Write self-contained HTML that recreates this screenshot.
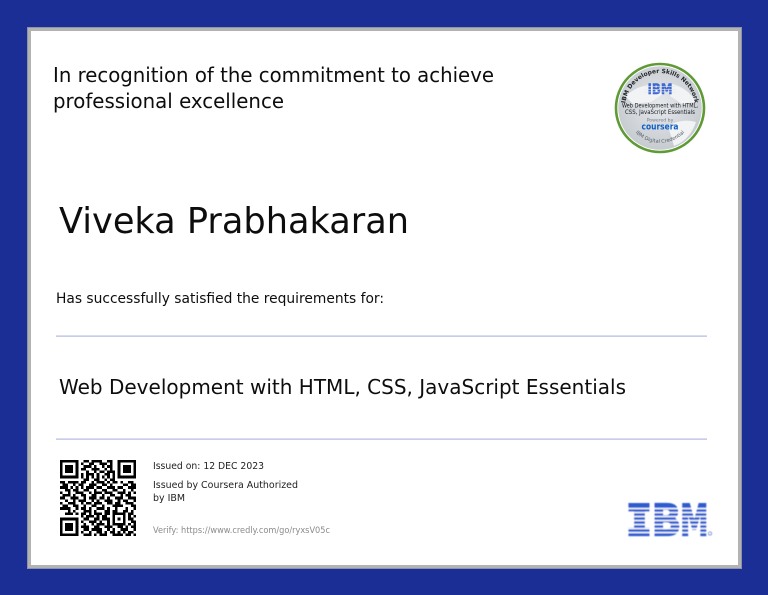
<!DOCTYPE html>
<html><head><meta charset="utf-8"><style>
html,body{margin:0;padding:0;width:768px;height:595px;overflow:hidden;background:#1a2e96}
svg{display:block}
text{font-family:"DejaVu Sans","Liberation Sans",sans-serif}
</style></head><body>
<svg width="768" height="595" viewBox="0 0 768 595" xmlns="http://www.w3.org/2000/svg">
<defs>
<radialGradient id="g" cx="50%" cy="45%" r="55%"><stop offset="0" stop-color="#e6e9ec"/><stop offset="1" stop-color="#c6cbd0"/></radialGradient>
<path id="top" d="M625 108a35 35 0 0 1 70 0"/>
<path id="bot" d="M628 122a35 35 0 0 0 64 0"/>
<filter id="b" x="-5%" y="-5%" width="110%" height="110%"><feGaussianBlur stdDeviation="0.3"/></filter>
<filter id="b1" x="-5%" y="-5%" width="110%" height="110%"><feGaussianBlur stdDeviation="0.3"/></filter>
<filter id="b2" x="-5%" y="-5%" width="110%" height="110%"><feGaussianBlur stdDeviation="0.45"/></filter>
</defs>
<rect width="768" height="595" fill="#1a2e96"/>
<rect x="27" y="27" width="715" height="542" fill="#8f93a8"/>
<rect x="28" y="28" width="713" height="540" fill="#b3b3b3"/>
<rect x="31" y="31" width="707" height="534" fill="#fff"/>

<g fill="#111" filter="url(#b)">
<text x="53" y="82" font-size="20" textLength="441" lengthAdjust="spacingAndGlyphs">In recognition of the commitment to achieve</text>
<text x="53" y="108" font-size="20" textLength="231" lengthAdjust="spacingAndGlyphs">professional excellence</text>
<text x="59" y="233" font-size="35.5" textLength="350" lengthAdjust="spacingAndGlyphs">Viveka Prabhakaran</text>
<text x="56" y="303" font-size="14" textLength="328" lengthAdjust="spacingAndGlyphs">Has successfully satisfied the requirements for:</text>
<text x="59" y="394" font-size="20" textLength="567" lengthAdjust="spacingAndGlyphs">Web Development with HTML, CSS, JavaScript Essentials</text>
<text x="153" y="469" font-size="9.6" fill="#222" textLength="111" lengthAdjust="spacingAndGlyphs">Issued on: 12 DEC 2023</text>
<text x="153" y="488" font-size="9.6" fill="#222" textLength="145" lengthAdjust="spacingAndGlyphs">Issued by Coursera Authorized</text>
<text x="153" y="501" font-size="9.6" fill="#222" textLength="32" lengthAdjust="spacingAndGlyphs">by IBM</text>
<text x="153" y="533" font-size="9" fill="#8a8a8a" textLength="177" lengthAdjust="spacingAndGlyphs">Verify: https://www.credly.com/go/ryxsV05c</text>
</g>

<rect x="56" y="335.6" width="651" height="1" fill="#a3abdf"/>
<rect x="56" y="438.6" width="651" height="1" fill="#a3abdf"/>

<!-- QR -->
<svg x="60" y="460" width="76" height="76" viewBox="0 0 29 29" shape-rendering="crispEdges">
<path fill="none" stroke="#000" stroke-width="1" d="
M0 .5h7M22 .5h7M9 .5h2M12 .5h4M18 .5h2
M0 1.5h1M6 1.5h1M22 1.5h1M28 1.5h1M8 1.5h1M11 1.5h2M15 1.5h3M19 1.5h1
M0 2.5h1M2 2.5h3M6 2.5h1M22 2.5h1M24 2.5h3M28 2.5h1M9 2.5h3M13 2.5h1M16 2.5h1M18 2.5h2
M0 3.5h1M2 3.5h3M6 3.5h1M22 3.5h1M24 3.5h3M28 3.5h1M8 3.5h2M12 3.5h3M17 3.5h1M19 3.5h1
M0 4.5h1M2 4.5h3M6 4.5h1M22 4.5h1M24 4.5h3M28 4.5h1M10 4.5h1M13 4.5h1M15 4.5h2M18 4.5h3
M0 5.5h1M6 5.5h1M22 5.5h1M28 5.5h1M8 5.5h1M10 5.5h3M14 5.5h1M17 5.5h2M20 5.5h1
M0 6.5h7M22 6.5h7M8 6.5h1M10 6.5h1M12 6.5h1M14 6.5h1M16 6.5h1M18 6.5h1M20 6.5h1
M9 7.5h2M13 7.5h2M17 7.5h1M19 7.5h2
M0 8.5h2M3 8.5h3M6 8.5h1M8 8.5h2M12 8.5h1M14 8.5h3M18 8.5h1M20 8.5h2M23 8.5h1M26 8.5h2
M1 9.5h2M5 9.5h1M7 9.5h2M11 9.5h3M16 9.5h2M19 9.5h1M24 9.5h2M27 9.5h2
M0 10.5h3M4 10.5h1M6 10.5h1M8 10.5h1M10 10.5h3M14 10.5h2M18 10.5h3M22 10.5h2M26 10.5h3
M2 11.5h2M5 11.5h2M9 11.5h2M13 11.5h1M16 11.5h2M20 11.5h2M24 11.5h1M27 11.5h1
M0 12.5h1M3 12.5h1M6 12.5h3M11 12.5h1M13 12.5h3M17 12.5h3M22 12.5h3M26 12.5h1M28 12.5h1
M1 13.5h3M5 13.5h1M8 13.5h2M12 13.5h2M16 13.5h1M19 13.5h2M23 13.5h1M25 13.5h2
M0 14.5h2M4 14.5h2M6 14.5h1M9 14.5h1M11 14.5h3M15 14.5h2M18 14.5h1M21 14.5h3M26 14.5h3
M2 15.5h1M5 15.5h1M7 15.5h3M12 15.5h1M14 15.5h1M17 15.5h3M22 15.5h1M24 15.5h2M28 15.5h1
M0 16.5h1M3 16.5h3M8 16.5h1M10 16.5h2M13 16.5h3M18 16.5h2M21 16.5h2M25 16.5h3
M1 17.5h2M5 17.5h2M9 17.5h1M12 17.5h2M16 17.5h1M20 17.5h4M27 17.5h2
M0 18.5h4M6 18.5h1M8 18.5h2M11 18.5h1M14 18.5h3M18 18.5h1M21 18.5h1M25 18.5h1M28 18.5h1
M3 19.5h1M5 19.5h1M9 19.5h3M13 19.5h1M17 19.5h2M20 19.5h2M24 19.5h2M27 19.5h1
M2 20.5h3M6 20.5h1M8 20.5h2M11 20.5h1M13 20.5h3M17 20.5h2M20 20.5h5M26 20.5h2
M8 21.5h1M10 21.5h3M14 21.5h1M16 21.5h2M20 21.5h1M24 21.5h1M26 21.5h1M28 21.5h1
M0 22.5h7M9 22.5h2M13 22.5h2M16 22.5h3M20 22.5h1M22 22.5h1M24 22.5h1M26 22.5h2
M0 23.5h1M6 23.5h1M8 23.5h1M11 23.5h3M15 23.5h1M18 23.5h1M20 23.5h1M24 23.5h1M27 23.5h2
M0 24.5h1M2 24.5h3M6 24.5h1M9 24.5h1M12 24.5h1M14 24.5h3M18 24.5h1M20 24.5h5M26 24.5h1M28 24.5h1
M0 25.5h1M2 25.5h3M6 25.5h1M8 25.5h3M13 25.5h2M17 25.5h3M22 25.5h2M25 25.5h1M27 25.5h2
M0 26.5h1M2 26.5h3M6 26.5h1M9 26.5h2M12 26.5h4M18 26.5h1M20 26.5h1M23 26.5h3M28 26.5h1
M0 27.5h1M6 27.5h1M8 27.5h1M11 27.5h1M14 27.5h2M17 27.5h1M19 27.5h2M22 27.5h1M24 27.5h1M26 27.5h2
M0 28.5h7M9 28.5h3M13 28.5h1M15 28.5h3M20 28.5h4M25 28.5h2M28 28.5h1"/>
</svg>

<!-- IBM logo -->
<g filter="url(#b2)">
<g font-size="44" style="font-family:'DejaVu Serif','Liberation Serif',serif;font-weight:700" fill="#2f5ccf" stroke="#2f5ccf" stroke-width="1.3">
<text x="621" y="535.5" textLength="36" lengthAdjust="spacingAndGlyphs">I</text>
<text x="651.5" y="535.5" textLength="30" lengthAdjust="spacingAndGlyphs">B</text>
<text x="680" y="535.5" textLength="28.5" lengthAdjust="spacingAndGlyphs">M</text>
</g>
<g fill="#fff">
<rect x="626" y="511.6" width="8" height="16.2"/><rect x="645" y="511.6" width="8" height="16.2"/>
<rect x="626" y="507.8" width="84" height="1.5"/><rect x="626" y="511.8" width="84" height="1.5"/>
<rect x="626" y="515.8" width="84" height="1.5"/><rect x="626" y="519.8" width="84" height="1.5"/>
<rect x="626" y="523.8" width="84" height="1.5"/><rect x="626" y="527.8" width="84" height="1.5"/>
<rect x="626" y="531.8" width="84" height="1.5"/>
</g>
<circle cx="710" cy="533.5" r="1.6" fill="none" stroke="#6d8bdb" stroke-width=".8"/>
</g>

<!-- Badge -->
<g filter="url(#b1)">
<circle cx="660" cy="108" r="44" fill="#fff" stroke="#5f9a35" stroke-width="2.6"/>
<circle cx="660" cy="108" r="41.8" fill="url(#g)"/>
<path d="M625 96q18-14 30-10l8 8-12 8-18 2zM672 84q16 4 24 18l-14 2-12-8zM668 126q14-8 28-4-6 18-22 24z" fill="#f1f3f5"/>
<text font-size="6" font-weight="700" fill="#23272c"><textPath href="#top" startOffset="50%" text-anchor="middle">IBM Developer Skills Network</textPath></text>
<g font-size="14" style="font-family:'DejaVu Serif','Liberation Serif',serif;font-weight:700" fill="#3f68d2" stroke="#3f68d2" stroke-width=".4">
<text x="647.5" y="94" textLength="25" lengthAdjust="spacingAndGlyphs">IBM</text>
</g>
<g fill="#e6e9ec"><rect x="644" y="86.4" width="32" height=".6"/><rect x="644" y="89" width="32" height=".6"/><rect x="644" y="91.6" width="32" height=".6"/></g>
<text x="660" y="107.5" font-size="5.8" fill="#15181c" text-anchor="middle" textLength="76" lengthAdjust="spacingAndGlyphs">Web Development with HTML,</text>
<text x="660" y="114" font-size="5.8" fill="#15181c" text-anchor="middle" textLength="70" lengthAdjust="spacingAndGlyphs">CSS, JavaScript Essentials</text>
<text x="660" y="121.5" font-size="4.6" fill="#777c83" text-anchor="middle">Powered by</text>
<text x="660" y="129.5" font-size="9" font-weight="700" fill="#0f5fc6" text-anchor="middle" textLength="37" lengthAdjust="spacingAndGlyphs">coursera</text>
<text font-size="5" fill="#555b61"><textPath href="#bot" startOffset="50%" text-anchor="middle">IBM Digital Credential</textPath></text>
</g>
</svg>
</body></html>
